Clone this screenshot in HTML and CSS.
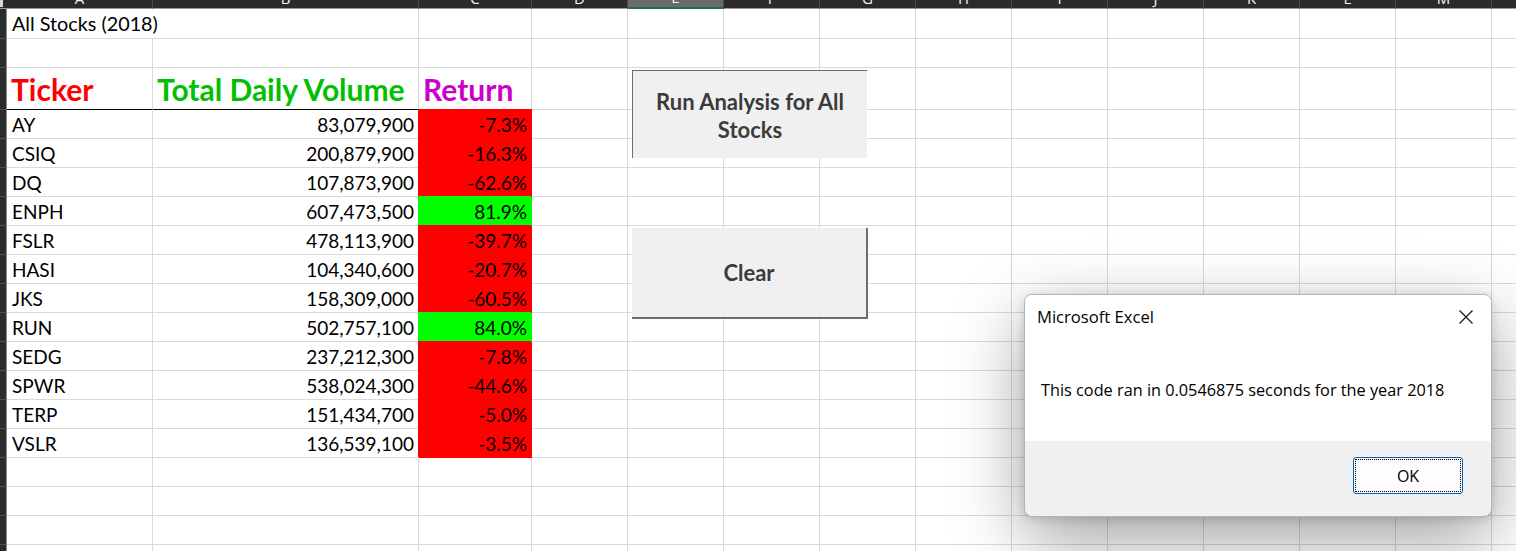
FILE: index.html
```html
<!DOCTYPE html>
<html lang="en">
<head>
<meta charset="utf-8">
<title>All Stocks (2018)</title>
<link rel="stylesheet" href="styles.css">
</head>
<body>
<div class="app">
  <div class="sheet">
    <!-- column headers -->
    <div class="corner"><span class="corner-mark"></span></div>
    <div class="ch"><span>A</span></div>
    <div class="ch"><span>B</span></div>
    <div class="ch"><span>C</span></div>
    <div class="ch"><span>D</span></div>
    <div class="ch ch-active"><span>E</span></div>
    <div class="ch"><span>F</span></div>
    <div class="ch"><span>G</span></div>
    <div class="ch"><span>H</span></div>
    <div class="ch"><span>I</span></div>
    <div class="ch"><span>J</span></div>
    <div class="ch"><span>K</span></div>
    <div class="ch"><span>L</span></div>
    <div class="ch"><span>M</span></div>
    <div class="ch ch-last"></div>

    <!-- row 1 -->
    <div class="rh"></div>
    <div class="c title span2">All Stocks (2018)</div>
    <div class="c"></div><div class="c"></div><div class="c"></div><div class="c"></div><div class="c"></div><div class="c"></div><div class="c"></div><div class="c"></div><div class="c"></div><div class="c"></div><div class="c"></div><div class="c last"></div>

    <!-- row 2 -->
    <div class="rh"></div>
    <div class="c"></div><div class="c"></div><div class="c"></div><div class="c"></div><div class="c"></div><div class="c"></div><div class="c"></div><div class="c"></div><div class="c"></div><div class="c"></div><div class="c"></div><div class="c"></div><div class="c"></div><div class="c last"></div>

    <!-- row 3 : headers -->
    <div class="rh"></div>
    <div class="c hd hd-ticker">Ticker</div>
    <div class="c hd hd-volume">Total Daily Volume</div>
    <div class="c hd hd-return">Return</div>
    <div class="c"></div><div class="c"></div><div class="c"></div><div class="c"></div><div class="c"></div><div class="c"></div><div class="c"></div><div class="c"></div><div class="c"></div><div class="c"></div><div class="c last"></div>

    <!-- data rows -->
    <div class="rh"></div>
    <div class="c">AY</div><div class="c num">83,079,900</div><div class="c num neg">-7.3%</div>
    <div class="c"></div><div class="c"></div><div class="c"></div><div class="c"></div><div class="c"></div><div class="c"></div><div class="c"></div><div class="c"></div><div class="c"></div><div class="c"></div><div class="c last"></div>

    <div class="rh"></div>
    <div class="c">CSIQ</div><div class="c num">200,879,900</div><div class="c num neg">-16.3%</div>
    <div class="c"></div><div class="c"></div><div class="c"></div><div class="c"></div><div class="c"></div><div class="c"></div><div class="c"></div><div class="c"></div><div class="c"></div><div class="c"></div><div class="c last"></div>

    <div class="rh"></div>
    <div class="c">DQ</div><div class="c num">107,873,900</div><div class="c num neg">-62.6%</div>
    <div class="c"></div><div class="c"></div><div class="c"></div><div class="c"></div><div class="c"></div><div class="c"></div><div class="c"></div><div class="c"></div><div class="c"></div><div class="c"></div><div class="c last"></div>

    <div class="rh"></div>
    <div class="c">ENPH</div><div class="c num">607,473,500</div><div class="c num pos">81.9%</div>
    <div class="c"></div><div class="c"></div><div class="c"></div><div class="c"></div><div class="c"></div><div class="c"></div><div class="c"></div><div class="c"></div><div class="c"></div><div class="c"></div><div class="c last"></div>

    <div class="rh"></div>
    <div class="c">FSLR</div><div class="c num">478,113,900</div><div class="c num neg">-39.7%</div>
    <div class="c"></div><div class="c"></div><div class="c"></div><div class="c"></div><div class="c"></div><div class="c"></div><div class="c"></div><div class="c"></div><div class="c"></div><div class="c"></div><div class="c last"></div>

    <div class="rh"></div>
    <div class="c">HASI</div><div class="c num">104,340,600</div><div class="c num neg">-20.7%</div>
    <div class="c"></div><div class="c"></div><div class="c"></div><div class="c"></div><div class="c"></div><div class="c"></div><div class="c"></div><div class="c"></div><div class="c"></div><div class="c"></div><div class="c last"></div>

    <div class="rh"></div>
    <div class="c">JKS</div><div class="c num">158,309,000</div><div class="c num neg">-60.5%</div>
    <div class="c"></div><div class="c"></div><div class="c"></div><div class="c"></div><div class="c"></div><div class="c"></div><div class="c"></div><div class="c"></div><div class="c"></div><div class="c"></div><div class="c last"></div>

    <div class="rh"></div>
    <div class="c">RUN</div><div class="c num">502,757,100</div><div class="c num pos">84.0%</div>
    <div class="c"></div><div class="c"></div><div class="c"></div><div class="c"></div><div class="c"></div><div class="c"></div><div class="c"></div><div class="c"></div><div class="c"></div><div class="c"></div><div class="c last"></div>

    <div class="rh"></div>
    <div class="c">SEDG</div><div class="c num">237,212,300</div><div class="c num neg">-7.8%</div>
    <div class="c"></div><div class="c"></div><div class="c"></div><div class="c"></div><div class="c"></div><div class="c"></div><div class="c"></div><div class="c"></div><div class="c"></div><div class="c"></div><div class="c last"></div>

    <div class="rh"></div>
    <div class="c">SPWR</div><div class="c num">538,024,300</div><div class="c num neg">-44.6%</div>
    <div class="c"></div><div class="c"></div><div class="c"></div><div class="c"></div><div class="c"></div><div class="c"></div><div class="c"></div><div class="c"></div><div class="c"></div><div class="c"></div><div class="c last"></div>

    <div class="rh"></div>
    <div class="c">TERP</div><div class="c num">151,434,700</div><div class="c num neg">-5.0%</div>
    <div class="c"></div><div class="c"></div><div class="c"></div><div class="c"></div><div class="c"></div><div class="c"></div><div class="c"></div><div class="c"></div><div class="c"></div><div class="c"></div><div class="c last"></div>

    <div class="rh"></div>
    <div class="c">VSLR</div><div class="c num">136,539,100</div><div class="c num neg">-3.5%</div>
    <div class="c"></div><div class="c"></div><div class="c"></div><div class="c"></div><div class="c"></div><div class="c"></div><div class="c"></div><div class="c"></div><div class="c"></div><div class="c"></div><div class="c last"></div>

    <!-- empty rows -->
    <div class="rh"></div>
    <div class="c"></div><div class="c"></div><div class="c"></div><div class="c"></div><div class="c"></div><div class="c"></div><div class="c"></div><div class="c"></div><div class="c"></div><div class="c"></div><div class="c"></div><div class="c"></div><div class="c"></div><div class="c last"></div>
    <div class="rh"></div>
    <div class="c"></div><div class="c"></div><div class="c"></div><div class="c"></div><div class="c"></div><div class="c"></div><div class="c"></div><div class="c"></div><div class="c"></div><div class="c"></div><div class="c"></div><div class="c"></div><div class="c"></div><div class="c last"></div>
    <div class="rh"></div>
    <div class="c"></div><div class="c"></div><div class="c"></div><div class="c"></div><div class="c"></div><div class="c"></div><div class="c"></div><div class="c"></div><div class="c"></div><div class="c"></div><div class="c"></div><div class="c"></div><div class="c"></div><div class="c last"></div>
    <div class="rh"></div>
    <div class="c"></div><div class="c"></div><div class="c"></div><div class="c"></div><div class="c"></div><div class="c"></div><div class="c"></div><div class="c"></div><div class="c"></div><div class="c"></div><div class="c"></div><div class="c"></div><div class="c"></div><div class="c last"></div>
  </div>

  <!-- form buttons floating over the sheet -->
  <div class="xl-btn btn-run"><span>Run Analysis for All<br>Stocks</span></div>
  <div class="xl-btn btn-clear"><span>Clear</span></div>

  <!-- message box -->
  <div class="dialog" role="dialog">
    <div class="dlg-body">
      <div class="dlg-title">
        <span>Microsoft Excel</span>
        <svg class="dlg-close" width="16" height="16" viewBox="0 0 16 16" aria-hidden="true">
          <path d="M1.5 1.5 L14.5 14.5 M14.5 1.5 L1.5 14.5" stroke="#1a1a1a" stroke-width="1.3" fill="none"/>
        </svg>
      </div>
      <div class="dlg-msg">This code ran in 0.0546875 seconds for the year 2018</div>
    </div>
    <div class="dlg-foot">
      <div class="ok-btn"><span class="ok-inner">OK</span></div>
    </div>
  </div>
</div>
</body>
</html>
```

FILE: styles.css
```css
* { box-sizing: border-box; }

html, body {
  margin: 0;
  padding: 0;
  background: #ffffff;
  overflow: hidden;
}

.app {
  position: relative;
  width: 1516px;
  height: 551px;
  overflow: hidden;
  font-family: Lato, "Liberation Sans", sans-serif;
  color: #000;
}

.sheet {
  display: grid;
  grid-template-columns: 7px 146px 266px 113px repeat(10, 96px) 1fr;
  grid-template-rows: 9px 30px 29px 42px repeat(16, 29px);
}

/* header strip */
.corner {
  background: #2b2b2b;
  border-bottom: 1px solid #9b9b9b;
  position: relative;
}
.corner-mark {
  position: absolute;
  left: 0;
  top: 0;
  width: 3px;
  height: 7px;
  background: #d8d8d8;
}

.ch {
  background: #2b2b2b;
  border-bottom: 1px solid #9b9b9b;
  border-right: 1px solid #4a4a4a;
  overflow: hidden;
  display: flex;
  justify-content: center;
  align-items: flex-end;
  color: #f2f2f2;
  font-family: "Open Sans", "Noto Sans", sans-serif;
  font-size: 15px;
}
.ch span {
  line-height: 15px;
  margin-bottom: 2px;
}
.ch-active {
  background: #6b6b6b;
  border-bottom: 2px solid #217346;
}
.ch-last { border-right: none; }

/* row header strip */
.rh {
  background: #2b2b2b;
  border-bottom: 1px solid #505050;
  border-right: 1px solid #8f8f8f;
}

/* cells */
.c {
  border-right: 1px solid #dadada;
  border-bottom: 1px solid #dadada;
  display: flex;
  align-items: flex-end;
  padding: 0 4px 2px 5px;
  font-size: 19px;
  line-height: 22px;
  white-space: nowrap;
  overflow: hidden;
}
.c.last { border-right: none; }
.span2 { grid-column: span 2; }

.title {
  font-size: 19.8px;
  padding-bottom: 4px;
}

.num { justify-content: flex-end; }

.hd {
  font-weight: 700;
  font-size: 30px;
  line-height: 34px;
  padding-bottom: 3px;
  padding-left: 4px;
  border-bottom-color: #000;
}
.hd-ticker { color: #ff0000; }
.hd-volume { color: #00c000; }
.hd-return { color: #cc00cc; }

.neg {
  background: #ff0000;
  border-color: #ff0000;
  box-shadow: -1px -1px 0 0 #ff0000;
}
.pos {
  background: #00ff00;
  border-color: #00ff00;
  box-shadow: -1px -1px 0 0 #00ff00;
}

/* form buttons */
.xl-btn {
  position: absolute;
  background: #f0f0f0;
  display: flex;
  align-items: center;
  justify-content: center;
  text-align: center;
  color: #3b3b3b;
  font-weight: 700;
  font-size: 22px;
  line-height: 28px;
}
.btn-run {
  left: 632px;
  top: 70px;
  width: 235px;
  height: 88px;
  border-top: 1px solid #6d6d6d;
  border-left: 1px solid #6d6d6d;
  padding-top: 3px;
}
.btn-clear {
  left: 632px;
  top: 228px;
  width: 236px;
  height: 91px;
  border-right: 2px solid #6d6d6d;
  border-bottom: 2px solid #6d6d6d;
}

/* message box */
.dialog {
  position: absolute;
  left: 1024px;
  top: 294px;
  width: 468px;
  height: 223px;
  border: 1px solid #b4b4b4;
  border-radius: 8px;
  overflow: hidden;
  background: #f0f0f0;
  box-shadow: 0 22px 70px rgba(0, 0, 0, 0.38), 0 2px 8px rgba(0, 0, 0, 0.14);
  display: flex;
  flex-direction: column;
  font-family: "Open Sans", "Noto Sans", sans-serif;
  color: #000;
}
.dlg-body {
  background: #ffffff;
  height: 146px;
  display: flex;
  flex-direction: column;
}
.dlg-title {
  display: flex;
  align-items: center;
  justify-content: space-between;
  padding: 9px 17px 0 12px;
  height: 34px;
  font-size: 16.6px;
}
.dlg-close { display: block; }
.dlg-msg {
  padding: 50px 0 0 16px;
  font-size: 16.3px;
}
.dlg-foot {
  flex: 1;
  display: flex;
  justify-content: flex-end;
  align-items: flex-start;
  padding: 16px 28px 0 0;
}
.ok-btn {
  width: 110px;
  height: 37px;
  border: 1px solid #0067c0;
  border-radius: 3px;
  background: #fdfdfd;
  padding: 1px;
}
.ok-inner {
  display: flex;
  align-items: center;
  justify-content: center;
  width: 100%;
  height: 100%;
  border: 1px dotted #000;
  font-size: 16px;
}
```
